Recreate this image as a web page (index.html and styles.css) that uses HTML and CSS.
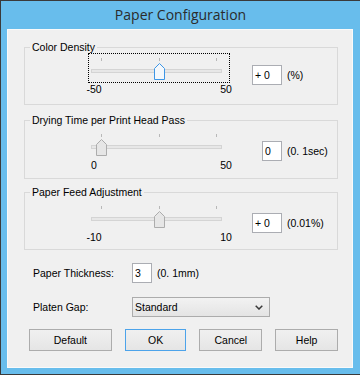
FILE: index.html
```html
<!DOCTYPE html>
<html>
<head>
<meta charset="utf-8">
<title>Paper Configuration</title>
<link rel="stylesheet" href="styles.css">
</head>
<body>
<div class="window">
  <div class="titlebar">Paper Configuration</div>
  <div class="client">
    <div class="group g1">
      <div class="legend">Color Density</div>
      <div class="slider-row r1">
        <div class="slider-col">
          <div class="slider focused">
            <div class="ticks"><i></i><i></i><i></i></div>
            <div class="track"></div>
            <svg class="thumb active" style="left:65px" width="11" height="17" viewBox="0 0 11 17"><polygon points="0.5,16.5 0.5,5.5 5.5,0.5 10.5,5.5 10.5,16.5"/></svg>
          </div>
          <div class="scale"><span>-50</span><span>50</span></div>
        </div>
        <div class="input-cell"><div class="edit">+ 0</div></div>
        <div class="unit">(%)</div>
      </div>
    </div>

    <div class="group g2">
      <div class="legend">Drying Time per Print Head Pass</div>
      <div class="slider-row r2">
        <div class="slider-col">
          <div class="slider">
            <div class="ticks"><i></i><i></i><i></i></div>
            <div class="track"></div>
            <svg class="thumb" style="left:7px" width="11" height="17" viewBox="0 0 11 17"><polygon points="0.5,16.5 0.5,5.5 5.5,0.5 10.5,5.5 10.5,16.5"/></svg>
          </div>
          <div class="scale"><span>0</span><span>50</span></div>
        </div>
        <div class="input-cell"><div class="edit narrow">0</div></div>
        <div class="unit">(0. 1sec)</div>
      </div>
    </div>

    <div class="group g3">
      <div class="legend">Paper Feed Adjustment</div>
      <div class="slider-row r3">
        <div class="slider-col">
          <div class="slider">
            <div class="ticks"><i></i><i></i><i></i></div>
            <div class="track"></div>
            <svg class="thumb" style="left:65px" width="11" height="17" viewBox="0 0 11 17"><polygon points="0.5,16.5 0.5,5.5 5.5,0.5 10.5,5.5 10.5,16.5"/></svg>
          </div>
          <div class="scale"><span>-10</span><span>10</span></div>
        </div>
        <div class="input-cell"><div class="edit">+ 0</div></div>
        <div class="unit">(0.01%)</div>
      </div>
    </div>

    <div class="field f1">
      <div class="field-label">Paper Thickness:</div>
      <div class="edit narrow">3</div>
      <div class="unit-inline">(0. 1mm)</div>
    </div>

    <div class="field f2">
      <div class="field-label">Platen Gap:</div>
      <div class="select">
        <span>Standard</span>
        <svg class="chevron" width="8" height="5" viewBox="0 0 8 5"><path d="M0.7 0.7 L4 4 L7.3 0.7"/></svg>
      </div>
    </div>

    <div class="buttons">
      <div class="btn btn-wide">Default</div>
      <div class="btn btn-ok">OK</div>
      <div class="btn">Cancel</div>
      <div class="btn">Help</div>
    </div>
  </div>
</div>
</body>
</html>
```

FILE: styles.css
```css
* { box-sizing: border-box; }
html, body { margin: 0; padding: 0; }
body {
  width: 360px;
  height: 375px;
  overflow: hidden;
  background: #ffffff;
  font-family: "Liberation Sans", Arial, sans-serif;
  font-size: 10.5px;
  color: #000000;
}
.window {
  width: 360px;
  height: 375px;
  background: #68bdec;
  border-top: 1px solid #3a3a3a;
  border-left: 1px solid #3a3a3a;
  border-bottom: 1px solid #3a3a3a;
  display: flex;
  flex-direction: column;
}
.titlebar {
  height: 28px;
  line-height: 28px;
  text-align: center;
  font-family: "Open Sans", sans-serif;
  font-size: 14px;
  color: #2b2b2b;
}
.client {
  margin: 0 7px 6px 6px;
  height: 339px;
  background: #f0f0f0;
  border: 1px solid #fafafa;
  padding: 0 14px 0 16px;
}
.group { border: 1px solid #d9d9d9; }
.g1 { margin-top: 17px; height: 58px; }
.g2 { margin-top: 15px; height: 59px; }
.g3 { margin-top: 13px; height: 58px; }
.legend {
  width: fit-content;
  margin: -7px 0 0 5px;
  padding: 0 2px;
  height: 13px;
  line-height: 13px;
  background: #f0f0f0;
}
.slider-row {
  display: flex;
  align-items: flex-start;
  margin-left: 63px;
}
.r1 { margin-top: -1px; }
.r2, .r3 { margin-top: 2px; }
.slider-col { width: 142px; }
.slider {
  position: relative;
  height: 30px;
  border: 1px dotted transparent;
}
.slider.focused { border-color: #000000; }
.ticks {
  display: flex;
  justify-content: space-between;
  width: 116px;
  height: 3px;
  margin: 4px 0 0 12px;
}
.ticks i { display: block; width: 1px; height: 3px; background: #b8b8b8; }
.track {
  width: 131px;
  height: 4px;
  margin: 8px 0 0 2px;
  background: #e7e7e7;
  border: 1px solid #d4d4d4;
}
.thumb { position: absolute; top: 9px; display: block; }
.thumb polygon { fill: #e6e6e6; stroke: #acacac; stroke-width: 1; }
.thumb.active polygon { fill: #f4f8fc; stroke: #3d96e6; }
.scale {
  display: flex;
  justify-content: space-between;
  width: 160px;
  margin-left: -8px;
  height: 13px;
  line-height: 13px;
}
.scale span { width: 28px; text-align: center; }
.input-cell {
  width: 30px;
  margin: 12px 0 0 22px;
  display: flex;
  justify-content: flex-end;
}
.edit {
  width: 30px;
  height: 20px;
  line-height: 18px;
  padding-left: 2px;
  background: #ffffff;
  border: 1px solid #abadb3;
  flex: none;
}
.edit.narrow { width: 20px; }
.unit { margin: 12px 0 0 5px; line-height: 20px; white-space: nowrap; }
.field {
  display: flex;
  align-items: center;
  height: 20px;
  margin-left: 9px;
}
.f1 { margin-top: 13px; }
.f2 { margin-top: 14px; }
.field-label { width: 99px; }
.unit-inline { margin-left: 5px; }
.select {
  width: 138px;
  height: 20px;
  border: 1px solid #acacac;
  background: linear-gradient(#f2f2f2, #e4e4e4);
  display: flex;
  align-items: center;
  justify-content: space-between;
  padding: 0 6px 0 2px;
}
.chevron path { fill: none; stroke: #3a3a3a; stroke-width: 1.5; }
.buttons {
  display: flex;
  gap: 13px;
  margin: 12px 0 0 5px;
}
.btn {
  width: 63px;
  height: 22px;
  border: 1px solid #acacac;
  background: linear-gradient(#f0f0f0, #e5e5e5);
  display: flex;
  align-items: center;
  justify-content: center;
}
.btn-wide { width: 83px; }
.btn-ok { width: 62px; border-color: #4ca3ea; }
```
